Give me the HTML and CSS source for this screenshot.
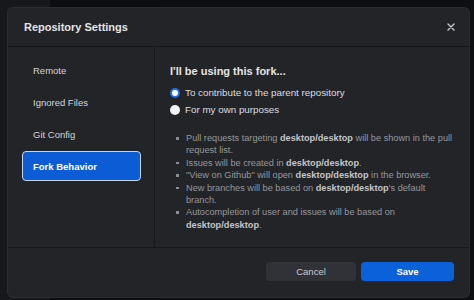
FILE: index.html
```html
<!DOCTYPE html>
<html>
<head>
<meta charset="utf-8">
<link rel="stylesheet" href="styles.css">
</head>
<body>
<div class="dialog">
  <header class="dlg-header">
    <h1 class="dlg-title">Repository Settings</h1>
    <button class="close" aria-label="Close">
      <svg width="8" height="8" viewBox="0 0 8 8"><path d="M1 1L7 7M7 1L1 7" stroke="#c9cbcf" stroke-width="1.4" stroke-linecap="round"/></svg>
    </button>
  </header>
  <div class="dlg-body">
    <nav class="sidebar">
      <div class="tab">Remote</div>
      <div class="tab">Ignored Files</div>
      <div class="tab">Git Config</div>
      <div class="tab active">Fork Behavior</div>
    </nav>
    <section class="content">
      <h2 class="heading">I'll be using this fork...</h2>
      <label class="radio"><span class="dot checked"></span>To contribute to the parent repository</label>
      <label class="radio"><span class="dot"></span>For my own purposes</label>
      <ul class="notes">
        <li>Pull requests targeting <b>desktop/desktop</b> will be shown in the pull request list.</li>
        <li>Issues will be created in <b>desktop/desktop</b>.</li>
        <li>"View on Github" will open <b>desktop/desktop</b> in the browser.</li>
        <li>New branches will be based on <b>desktop/desktop</b>'s default branch.</li>
        <li>Autocompletion of user and issues will be based on <b>desktop/desktop</b>.</li>
      </ul>
    </section>
  </div>
  <footer class="dlg-footer">
    <button class="btn cancel">Cancel</button>
    <button class="btn save">Save</button>
  </footer>
</div>
</body>
</html>
```
FILE: styles.css
```css
* { box-sizing: border-box; }
html, body { margin: 0; padding: 0; }
body {
  width: 474px;
  height: 300px;
  overflow: hidden;
  background: linear-gradient(to right, #16181b 0, #16181b 50px, #0b0d10 50px, #0b0d10 160px, #0d0f12 160px);
  font-family: "Liberation Sans", Arial, sans-serif;
  padding: 8px 5px 3px 8px;
}
.dialog {
  width: 461px;
  height: 289px;
  background: #222428;
  border-radius: 5px;
  display: flex;
  flex-direction: column;
  box-shadow: 0 0 0 1px #2a2c31;
}
.dlg-header {
  height: 39px;
  flex: none;
  display: flex;
  align-items: center;
  justify-content: space-between;
  padding: 0 12px 0 16px;
  border-bottom: 1px solid #17181b;
}
.dlg-title {
  margin: 0;
  font-size: 11px;
  font-weight: bold;
  color: #e4e5e7;
}
.close {
  background: none;
  border: 0;
  padding: 0;
  width: 12px;
  height: 12px;
  display: flex;
  align-items: center;
  justify-content: center;
}
.dlg-body {
  flex: 1;
  display: flex;
  border-bottom: 1px solid #17181b;
}
.sidebar {
  width: 147px;
  flex: none;
  border-right: 1px solid #17181b;
  padding: 8px 13px 0 14px;
  display: flex;
  flex-direction: column;
  gap: 2px;
}
.tab {
  height: 30px;
  display: flex;
  align-items: center;
  padding-left: 10px;
  font-size: 9.5px;
  color: #d4d5d8;
  border-radius: 4px;
  border: 1px solid transparent;
}
.tab.active {
  background: #0b5cd5;
  border-color: #c9d6ea;
  color: #ffffff;
  font-weight: bold;
}
.content {
  flex: 1;
  padding: 17px 15px 0 15px;
  color: #d4d5d8;
}
.heading {
  margin: 0 0 6px;
  font-size: 11px;
  font-weight: bold;
  color: #e4e5e7;
  line-height: 14px;
}
.radio {
  display: flex;
  align-items: center;
  gap: 5px;
  font-size: 9.8px;
  line-height: 17px;
  color: #dcdde0;
}
.dot {
  width: 10px;
  height: 10px;
  border-radius: 50%;
  background: #f2f2f2;
  flex: none;
}
.dot.checked {
  background: #ffffff;
  border: 2.5px solid #1f6fe5;
}
.notes {
  margin: 14px 0 0;
  padding: 0 0 0 16px;
  font-size: 9.2px;
  line-height: 12.4px;
  color: #96989c;
  list-style: none;
}
.notes li { position: relative; }
.notes li::before {
  content: "";
  position: absolute;
  left: -10px;
  top: 5px;
  width: 2.5px;
  height: 2.5px;
  background: #8a8c90;
}
.notes b { color: #c3c5c9; }
.dlg-footer {
  height: 49px;
  flex: none;
  display: flex;
  justify-content: flex-end;
  align-items: center;
  gap: 5px;
  padding: 0 15px 2px 0;
}
.btn {
  height: 19px;
  border: 0;
  border-radius: 4px;
  font-family: inherit;
  font-size: 9.5px;
  padding: 0;
}
.cancel {
  width: 90px;
  background: #303238;
  color: #c9cbcf;
}
.save {
  width: 93px;
  background: #0b61da;
  color: #ffffff;
  font-weight: bold;
}
```
